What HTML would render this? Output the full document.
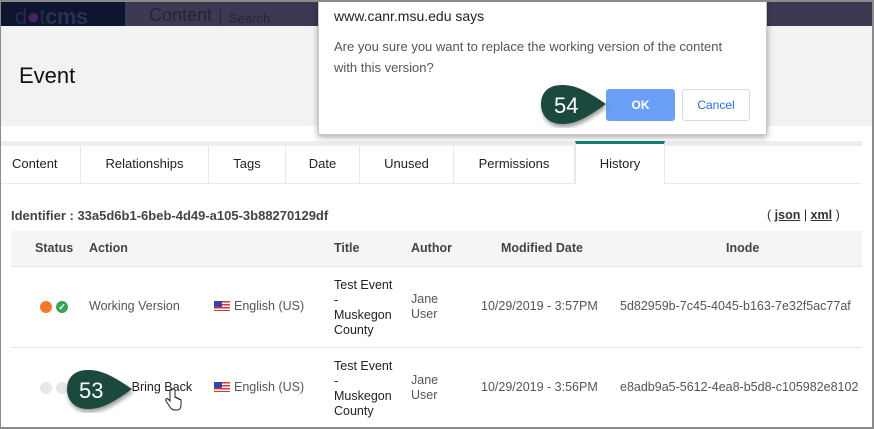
<!DOCTYPE html>
<html><head><meta charset="utf-8"><style>
*{margin:0;padding:0;box-sizing:border-box}
body{width:874px;height:429px;overflow:hidden;background:#fff;font-family:"Liberation Sans",Arial,sans-serif;position:relative;color:#333}
.a{position:absolute;white-space:nowrap}
.frame{position:absolute;left:0;top:0;width:874px;height:429px;border:2px solid #8a8a8a;border-left-width:1px;pointer-events:none;z-index:50}
.tab{position:absolute;top:146px;height:38px;border-right:1px solid #e8e8e8;font-size:13px;color:#222;text-align:center;line-height:36px}
.th{position:absolute;top:241px;font-size:12.5px;font-weight:bold;color:#444}
.td{position:absolute;font-size:12.5px;color:#555;line-height:15px}
.flag{display:inline-block;width:16px;height:10px;vertical-align:-1px;margin-right:4px;background:repeating-linear-gradient(#d33 0 1.5px,#fff 1.5px 3px);position:relative}
.flag:before{content:"";position:absolute;left:0;top:0;width:8px;height:6px;background:#34a}
</style></head><body>
<div class="a" style="left:0;top:0;width:874px;height:26px;background:#3b3a52"></div>
<div class="a" style="left:0;top:0;width:125px;height:26px;background:#0e1530"></div>
<div class="a" style="left:15px;top:4px;font-size:22px;color:#252b45;letter-spacing:-0.5px">d<span style="color:#4a2460">●</span>t<b style="color:#2a3050">cms</b></div>
<div class="a" style="left:149px;top:5px;font-size:18px;color:#25243a">Content</div>
<div class="a" style="left:220px;top:9px;width:1px;height:16px;background:#25243a"></div>
<div class="a" style="left:229px;top:11px;font-size:13px;color:#25243a">Search</div>
<div class="a" style="left:0;top:26px;width:874px;height:100px;background:#f1f2f4"></div>
<div class="a" style="left:19px;top:63px;font-size:22px;color:#111">Event</div>

<div class="a" style="left:0;top:141px;width:862px;height:5px;background:#eceef0"></div>
<div class="a" style="left:0;top:183px;width:862px;height:1px;background:#e8e8e8"></div>
<div class="tab" style="left:0;width:81px;text-align:left;padding-left:12px">Content</div>
<div class="tab" style="left:81px;width:128px">Relationships</div>
<div class="tab" style="left:209px;width:77px">Tags</div>
<div class="tab" style="left:286px;width:74px">Date</div>
<div class="tab" style="left:360px;width:94px">Unused</div>
<div class="tab" style="left:454px;width:121px">Permissions</div>
<div class="tab" style="left:575px;top:141px;height:43px;width:90px;background:#fff;border-top:3px solid #137d77;line-height:40px;border-left:1px solid #e8e8e8">History</div>

<div class="a" style="left:11px;top:208px;font-size:13px;font-weight:bold;color:#444">Identifier : 33a5d6b1-6beb-4d49-a105-3b88270129df</div>
<div class="a" style="left:767px;top:208px;font-size:12.5px;color:#333">( <b style="text-decoration:underline">json</b> | <b style="text-decoration:underline">xml</b> )</div>

<div class="a" style="left:11px;top:231px;width:851px;height:36px;background:#f5f5f5;border-bottom:1px solid #e6e6e6"></div>
<div class="th" style="left:35px">Status</div>
<div class="th" style="left:89px">Action</div>
<div class="th" style="left:334px">Title</div>
<div class="th" style="left:411px">Author</div>
<div class="th" style="left:501px">Modified Date</div>
<div class="th" style="left:726px">Inode</div>

<div class="a" style="left:11px;top:347px;width:851px;height:1px;background:#e6e6e6"></div>

<div class="a" style="left:40px;top:301px;width:12px;height:12px;border-radius:50%;background:#f07b2b"></div>
<div class="a" style="left:56px;top:301px;width:12px;height:12px;border-radius:50%;background:#3aa35a;color:#fff;font-size:9px;line-height:12px;text-align:center;font-weight:bold">✓</div>
<div class="td" style="left:89px;top:299px">Working Version</div>
<div class="td" style="left:214px;top:299px"><span class="flag"></span>English (US)</div>
<div class="td" style="left:334px;top:278px;color:#222">Test Event<br>-<br>Muskegon<br>County</div>
<div class="td" style="left:411px;top:292px">Jane<br>User</div>
<div class="td" style="left:481px;top:299px">10/29/2019 - 3:57PM</div>
<div class="td" style="left:620px;top:299px">5d82959b-7c45-4045-b163-7e32f5ac77af</div>

<div class="a" style="left:40px;top:382px;width:12px;height:12px;border-radius:50%;background:#e8e8ea"></div>
<div class="a" style="left:56px;top:382px;width:12px;height:12px;border-radius:50%;background:#e8e8ea"></div>
<div class="td" style="left:124px;top:380px;color:#222">- Bring Back</div>
<div class="td" style="left:214px;top:380px"><span class="flag"></span>English (US)</div>
<div class="td" style="left:334px;top:359px;color:#222">Test Event<br>-<br>Muskegon<br>County</div>
<div class="td" style="left:411px;top:373px">Jane<br>User</div>
<div class="td" style="left:481px;top:380px">10/29/2019 - 3:56PM</div>
<div class="td" style="left:620px;top:380px">e8adb9a5-5612-4ea8-b5d8-c105982e8102</div>

<svg class="a" style="left:164px;top:388px" width="20" height="24" viewBox="0 0 20 24"><path d="M6 2v11l-2-2c-1-1-3 0-2 2l4 6c1 2 3 3 5 3h2c3 0 4-2 4-5v-5c0-1-2-1-2 0v-1c0-1-2-1-2 0v-1c0-1-2-1-2 0V2c0-1.5-3-1.5-3 0z" fill="#fff" stroke="#222" stroke-width="1"/></svg>

<svg class="a" style="left:64px;top:367px;z-index:5" width="72" height="46" viewBox="0 0 72 46"><defs><filter id="s"><feDropShadow dx="1" dy="3" stdDeviation="2" flood-opacity="0.4"/></filter></defs><path d="M24 3C10 3 3 11 3 22s7 20 21 20c12 0 22-4 44-20C46 7 36 3 24 3z" fill="#1e4a3c" filter="url(#s)"/></svg>
<div class="a" style="left:79px;top:378px;font-size:22px;color:#fff;z-index:6">53</div>

<div class="a" style="left:318px;top:0;width:449px;height:135px;background:#fff;border:1px solid #c8c8c8;box-shadow:0 2px 6px rgba(0,0,0,.35);z-index:10">
<div class="a" style="left:15px;top:7px;font-size:14px;color:#222">www.canr.msu.edu says</div>
<div class="a" style="left:15px;top:35px;font-size:13px;color:#555;line-height:21px">Are you sure you want to replace the working version of the content<br>with this version?</div>
<div class="a" style="left:287px;top:88px;width:69px;height:32px;background:#6a9ff5;border-radius:3px;color:#fff;font-size:12px;font-weight:bold;text-align:center;line-height:32px">OK</div>
<div class="a" style="left:363px;top:88px;width:68px;height:32px;border:1px solid #dcdcdc;border-radius:3px;color:#2a6ee8;font-size:12px;text-align:center;line-height:30px">Cancel</div>
</div>
<svg class="a" style="left:538px;top:82px;z-index:11" width="72" height="46" viewBox="0 0 72 46"><path d="M24 3C10 3 3 11 3 22s7 20 21 20c12 0 22-4 44-20C46 7 36 3 24 3z" fill="#1e4a3c" filter="url(#s)"/></svg>
<div class="a" style="left:554px;top:93px;font-size:22px;color:#fff;z-index:12">54</div>
<div class="frame"></div>
</body></html>
